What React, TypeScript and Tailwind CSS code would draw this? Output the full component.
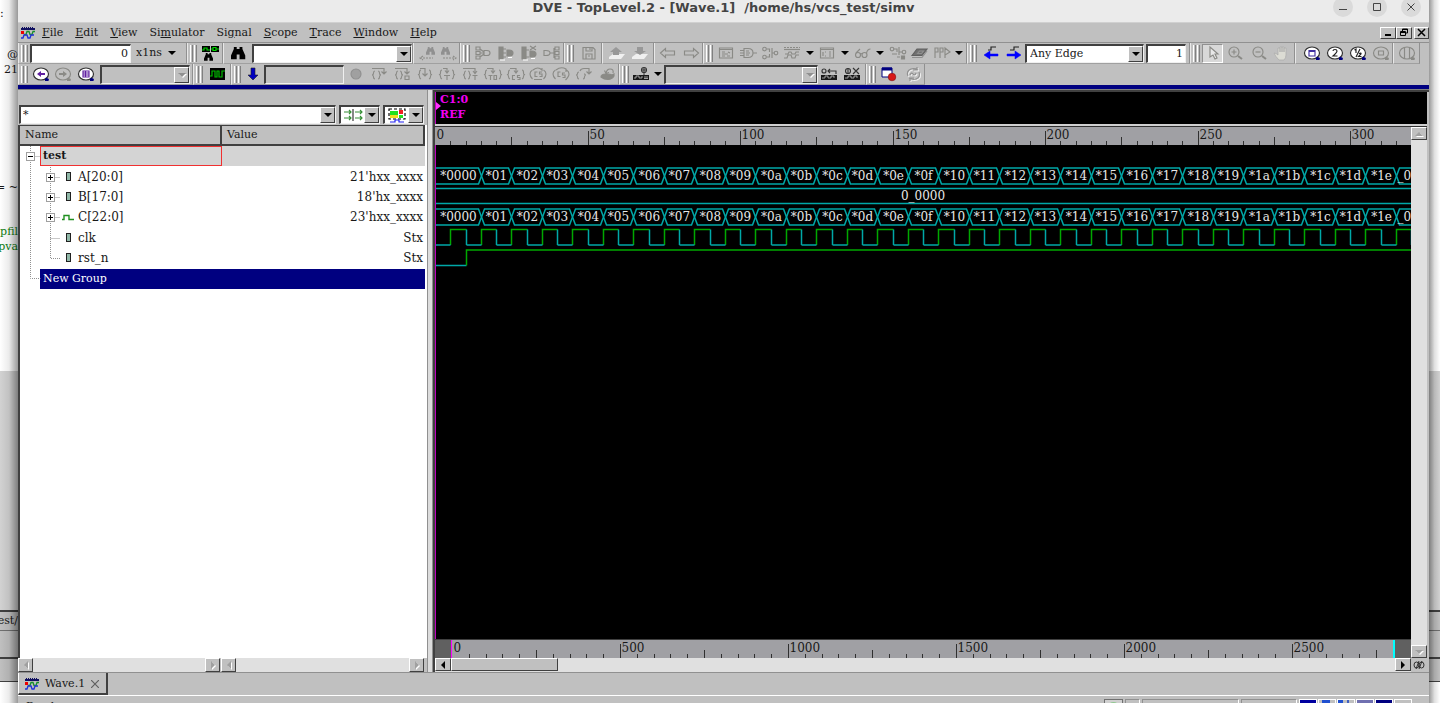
import React from 'react';

type Kids = { children?: React.ReactNode };

const G = '#8a8a86';
const CYAN = '#00a8a8';
const GREEN = '#00a800';

/* ---------- bevel helpers ---------- */
const RAISED = 'border border-t-white border-l-white border-r-[#404040] border-b-[#404040] bg-[#c0c0c0]';
const SUNKEN = 'border-t-2 border-l-2 border-r border-b border-t-[#404040] border-l-[#404040] border-r-[#f0f0f0] border-b-[#f0f0f0]';

function Arrow({ dir = 'down', color = '#000' }: { dir?: 'down' | 'up' | 'left' | 'right'; color?: string }) {
  const pts = {
    down: '1,3 9,3 5,7',
    up: '1,7 9,7 5,3',
    left: '7,1 7,9 3,5',
    right: '3,1 3,9 7,5',
  }[dir];
  return (
    <svg width="10" height="10" viewBox="0 0 10 10" className="shrink-0">
      {color !== '#000' && <polygon points={pts} fill="#fff" transform="translate(1 1)" />}
      <polygon points={pts} fill={color} />
    </svg>
  );
}

function Ico({ label, children, className = 'flex-1' }: Kids & { label: string; className?: string }) {
  return (
    <button aria-label={label} className={`flex h-full min-w-0 items-center justify-center ${className}`}>
      <svg width="20" height="16" viewBox="0 0 20 16" fill="none" stroke={G} strokeWidth="1.150" className="shrink-0">
        {children}
      </svg>
    </button>
  );
}

function MenuArrow({ label }: { label: string }) {
  return (
    <button aria-label={label} className="flex h-full w-[13px] shrink-0 items-center justify-center">
      <Arrow />
    </button>
  );
}

function Group({ children, handle, className }: Kids & { handle?: boolean; className: string }) {
  return (
    <div className={`flex h-full shrink-0 items-center overflow-hidden border-l border-r border-b border-l-[#e8e8e8] border-r-[#909090] border-b-[#a0a0a0] ${className}`}>
      {handle && (
        <div className="mx-[2px] flex h-[17px] shrink-0 gap-px">
          <div className="w-[3px] border-l border-r border-l-white border-r-[#808080]" />
          <div className="w-[3px] border-l border-r border-l-white border-r-[#808080]" />
        </div>
      )}
      {children}
    </div>
  );
}

function Combo({ label, value = '', className, disabled }: { label: string; value?: string; className: string; disabled?: boolean }) {
  return (
    <div className={`flex h-[19px] items-stretch ${SUNKEN} ${disabled ? 'bg-[#c0c0c0]' : 'bg-white'} ${className}`}>
      <input aria-label={label} defaultValue={value} disabled={disabled} className="w-0 min-w-0 flex-1 bg-transparent px-[2px] outline-none" />
      <button aria-label={`${label} list`} className={`flex w-[15px] shrink-0 items-center justify-center ${RAISED}`}>
        <Arrow color={disabled ? '#909090' : '#000'} />
      </button>
    </div>
  );
}

/* ---------- icons ---------- */
function WaveIcon() {
  return (
    <svg width="14" height="12" viewBox="0 0 14 12" fill="none" className="shrink-0">
      <path d="M0 2h14" stroke="#101060" strokeWidth="2" />
      <path d="M1 .5h12" stroke="#101060" strokeWidth="1" strokeDasharray="1 1" />
      <rect x="0" y="4" width="3" height="3" fill="#e00" />
      <path d="M3 7.500h2l1-3h2l1 3h2l1-3h2" stroke="#18902c" strokeWidth="1.3" />
      <path d="M0 11h2l1-3h3l1 3h2l1-3h3" stroke="#2030d8" strokeWidth="1.3" />
    </svg>
  );
}

const binoc = (x: number, y: number, s: number, c: string) => (
  <g transform={`translate(${x} ${y}) scale(${s})`} fill={c} stroke="none">
    <path d="M3 0h3v2h3V0h3v2l3 7v4H9V8H6v5H0V9l3-7z" />
  </g>
);

const lens = (c: string, tail: string, inner: React.ReactNode, fill = '#fff') => (
  <>
    <ellipse cx="10" cy="8" rx="7.500" ry="6" stroke={c} fill={fill} />
    <path d="M14.500 12.500l3 1.500h-3.500" stroke={tail} strokeWidth="2" />
    {inner}
  </>
);

function ToolbarTop() {
  return (
    <div className="flex h-[22px] shrink-0 border-t border-[#909090]">
      <Group handle className="w-[169px]">
        <input aria-label="Time" defaultValue="0" className={`h-[19px] w-[101px] bg-white px-[2px] text-right outline-none ${SUNKEN}`} />
        <div className="relative flex flex-1 items-center">
          <select aria-label="Time unit" className="w-full appearance-none bg-transparent pl-[5px] outline-none">
            <option>x1ns</option>
          </select>
          <span className="pointer-events-none absolute right-[9px]"><Arrow /></span>
        </div>
      </Group>
      <Group handle className="w-[36px]">
        <Ico label="Find signal">
          <rect x="1" y="1" width="8" height="6" fill="#000" stroke="none" />
          <path d="M1 5h2V3h3v2h3" stroke="#00d800" />
          <path d="M10 1h8v6h-8z" fill="#000" stroke="none" />
          <path d="M10 4h2M12 2.500h3v3h-3zM15 4h3" stroke="#00d800" />
          {binoc(3, 8, 0.6, '#000')}
        </Ico>
      </Group>
      <Group className="w-[190px]">
        <Ico label="Find">{binoc(3, 2, 0.95, '#000')}</Ico>
        <Combo label="Search text" className="w-[160px]" />
      </Group>
      <Group className="w-[47px] pl-1">
        <Ico label="Find previous">
          {binoc(8, 2, 0.6, '#909090')}
          <path d="M2 13h13M5 11l-3 2 3 2" strokeDasharray="2 1" />
        </Ico>
        <Ico label="Find next">
          {binoc(2, 2, 0.6, '#909090')}
          <path d="M4 13h13M14 11l3 2-3 2" strokeDasharray="2 1" />
        </Ico>
      </Group>
      <Group handle className="w-[104px]">
        <Ico label="Drivers">
          <path d="M3 2h4v3H3zM3 6.500h4v3H3zM3 11h4v3H3zM7 4l4 3M7 12l4-3M7 8h4" />
          <path d="M11 5.500h3q3 0 3 2.500t-3 2.500h-3z" />
        </Ico>
        <Ico label="Loads">
          <path d="M3 2h4v12H3z" fill={G} />
          <path d="M7 4h3M7 8h3M7 12h3" />
          <path d="M11 5h2q4 0 4 3t-4 3h-2z" fill={G} />
          <path d="M4 15h5M12 12.500h4" stroke="#fff" />
        </Ico>
        <Ico label="Clear trace">
          <path d="M3 2h4v12H3z" fill={G} />
          <path d="M7 5h3M7 12h3M11 1l6 4M17 1l-6 4" />
          <path d="M11 6h2q4 0 4 3t-4 3h-2z" fill={G} />
          <path d="M4 15h5M12 13.500h4" stroke="#fff" />
        </Ico>
        <Ico label="Fan out">
          <path d="M2 5.500h2q4 0 4 2.500t-4 2.500H2zM8 8h4M12 3v10M13 2h4v3h-4zM13 6.500h4v3h-4zM13 11h4v3h-4z" />
        </Ico>
      </Group>
      <Group handle className="w-[38px]">
        <Ico label="Save">
          <path d="M4 2.500h10l2 2v9.500H4zM7 3v3h6V3M7 14V9h6v5M11 3v2M9 11h2" />
        </Ico>
      </Group>
      <Group className="w-[52px] px-[2px]">
        <Ico label="Move up">
          <path d="M2 12l4-3h12l-4 5H2z" fill="#f0f0f0" stroke="none" />
          <path d="M9 2l6 5h-3v3H6V7H3z" fill="#989898" stroke="none" />
        </Ico>
        <Ico label="Move down">
          <path d="M2 12l4-3h12l-4 5H2z" fill="#f0f0f0" stroke="none" />
          <path d="M10 10l6-4h-3V2H7v4H4z" fill="#989898" stroke="none" />
        </Ico>
      </Group>
      <Group className="w-[49px] pl-[2px]">
        <Ico label="Back"><path d="M2.500 8l5-4.500v2.500h9v4h-9v2.500z" /></Ico>
        <Ico label="Forward"><path d="M17.500 8l-5-4.500v2.500h-9v4h9v2.500z" /></Ico>
      </Group>
      <Group handle className="w-[264px]">
        <Ico label="Source"><path d="M3.500 3h13v10h-13zM3 4.500h14M6 7h3M6 9h6M12 7l2 1M6 11h3M11 11h3" /></Ico>
        <Ico label="Schematic"><path d="M6 3.500h4q5 0 5 4.500t-5 4.500H6zM2 5.500h4M2 8h4M2 10.500h4M15 8h4M8 6h3M8 8h4M8 10h3" /></Ico>
        <Ico label="Path schematic">
          <circle cx="4.500" cy="4" r="1.800" /><circle cx="4.500" cy="12" r="1.800" /><circle cx="16" cy="8" r="1.800" />
          <path d="M6.500 4h3v3M6.500 12h3V9M12 3v10M12 8h2" />
        </Ico>
        <Ico label="Waveform">
          <path d="M2 2.500h16" strokeDasharray="2 1" /><path d="M2 4.500h16" />
          <path d="M3 9h3l1-2h2l1 2h3l1-2h3M2 13h3l1-3h3l1 3h3l1-3h3" />
        </Ico>
        <MenuArrow label="Waveform options" />
        <Ico label="List"><path d="M3.500 3h13v10h-13zM3 4.500h14M6 7v4M8 7h1M12 7h2M12 9h2M8 11h1M12 11h2" /></Ico>
        <MenuArrow label="List options" />
        <Ico label="Watch">
          <circle cx="5" cy="10" r="2.500" /><circle cx="11.500" cy="10" r="2.500" />
          <path d="M7 9q1-1 2 0M3 8l4-4M13.500 8q1-4 4-4" />
        </Ico>
        <MenuArrow label="Watch options" />
        <Ico label="Hierarchy">
          <circle cx="4" cy="4" r="1.800" /><circle cx="16" cy="7" r="1.800" />
          <path d="M6 4h3v3M4 9h5M11 2v8M11 7h3M9 12h3" /><path d="M13.500 11h3v3h-3z" fill={G} />
        </Ico>
        <Ico label="Memory">
          <path d="M2 10.500l5-6.500h10l-5 6.500z" fill="#707070" stroke="#606060" />
          <path d="M2 12.500h10l5-6.500M7.500 8.500l2-2.500h4l-2 2.500z" stroke="#909090" />
        </Ico>
        <Ico label="Path"><path d="M3 13V3h3v4H3M8 13V3h3v4H8M13 13V3l5 4-5 3" /></Ico>
        <MenuArrow label="Path options" />
      </Group>
      <Group handle className="w-[223px]">
        <Ico label="Previous edge">
          <path d="M7 5h3V2h5" stroke="#202020" />
          <path d="M3 10l6-4v3h8v2H9v3z" fill="#00f" stroke="#00f" strokeWidth=".5" />
        </Ico>
        <Ico label="Next edge">
          <path d="M6 5h4V2h5" stroke="#202020" />
          <path d="M17 10l-6-4v3H3v2h8v3z" fill="#00f" stroke="#00f" strokeWidth=".5" />
        </Ico>
        <div className={`relative flex h-[19px] w-[119px] items-center bg-white ${SUNKEN}`}>
          <select aria-label="Edge kind" className="w-full appearance-none bg-transparent pl-[3px] outline-none">
            <option>Any Edge</option>
          </select>
          <span className={`pointer-events-none absolute right-0 flex h-full w-[15px] items-center justify-center ${RAISED}`}><Arrow /></span>
        </div>
        <input aria-label="Edge count" defaultValue="1" className={`mr-[3px] ml-[2px] h-[19px] w-[40px] bg-white px-[2px] text-right outline-none ${SUNKEN}`} />
      </Group>
      <Group handle className="w-[105px]">
        <div className="flex h-[19px] w-[21px] border border-t-[#909090] border-r-white border-b-white border-l-[#909090] bg-[#d8d8d8]">
          <Ico label="Select tool"><path d="M7 2v10l3-2 2 4 2-1-2-4h3z" fill="#e8e8e8" /></Ico>
        </div>
        <Ico label="Zoom in"><circle cx="9" cy="7" r="5" /><path d="M13 11l4 3" strokeWidth="2" /><path d="M6.500 7h5M9 4.500v5" /></Ico>
        <Ico label="Zoom out"><circle cx="9" cy="7" r="5" /><path d="M13 11l4 3" strokeWidth="2" /><path d="M6.500 7h5" /></Ico>
        <Ico label="Pan">
          <path d="M7 15q-4-4-5-7 2 0 4 2V3h2v4V2h2v5V2h2v5V3h2v7q0 3-2 5z" fill="#dcdcd4" stroke="#aaa" strokeWidth=".7" />
        </Ico>
      </Group>
      <Group className="w-[98px] pl-1">
        <Ico label="Zoom full">{lens('#303030', '#000080', <path d="M7 5.500h6v5.500H7zM7 6.500h6" stroke="#4030a0" />)}</Ico>
        <Ico label="Zoom 2x">{lens('#303030', '#000080', <path d="M8 6q0-1.500 2-1.500t2 1.500-4 5h4.500" stroke="#202020" />)}</Ico>
        <Ico label="Zoom half">{lens('#303030', '#000080', <path d="M6.500 5l1.500-1v4M12 4l-4 8M11 8.500q2.500-1 2 .5l-2.500 2.500h3" stroke="#202020" />)}</Ico>
        <Ico label="Zoom fit">{lens(G, G, <path d="M7.500 6h5v4h-5z" />, 'none')}</Ico>
      </Group>
      <Group className="w-[27px]">
        <Ico label="Zoom cursors">{lens(G, G, <path d="M7.500 2.500v11M12.500 2.500v11" />, 'none')}</Ico>
      </Group>
    </div>
  );
}

const steps: { label: string; art: React.ReactNode }[] = [
  { label: 'Step', art: <path d="M6 5q-1.500 0-1.500 2T3 9q1.500 0 1.500 2T6 13M9 5q1.500 0 1.500 2T12 9q-1.500 0-1.500 2T9 13M3 2.500h12V8M12.500 5.500L15 8l2.500-2.500" /> },
  { label: 'Next', art: <path d="M6 5q-1.500 0-1.500 2T3 9q1.500 0 1.500 2T6 13M8 5q1.500 0 1.500 2T11 9q-1.500 0-1.500 2T8 13M3 2.500h12V8M12.500 5.500L15 8l2.500-2.500M13 10h4v3.500h-4z" /> },
  { label: 'Step in', art: <path d="M6 4q-1.500 0-1.500 2.500T3 8.500q1.500 0 1.500 2T6 13M14 4q1.500 0 1.500 2.500T17 8.500q-1.500 0-1.500 2T14 13M5 2.500h5V10M7.500 7.500L10 10l2.500-2.500" /> },
  { label: 'Step thread', art: <path d="M5 4q-1.500 0-1.500 2.500T2 8.500q1.500 0 1.500 2T5 13M15 4q1.500 0 1.500 2.500T18 8.500q-1.500 0-1.500 2T15 13M6 2.500h4V7M8 4.500L10 7l2-2.500M7 9.500h6M10 9.500V14" /> },
  { label: 'Next thread', art: <path d="M6 5q-1.500 0-1.500 2T3 9q1.500 0 1.500 2T6 13M8 5q1.500 0 1.500 2T11 9q-1.500 0-1.500 2T8 13M3 2.500h12V7M13 5l2 2.500L17 5M12.500 9.500h5M15 9.500V14" /> },
  { label: 'Step testbench', art: <path d="M4 4q-1.500 0-1.500 2.500T1 8.500q1.500 0 1.500 2T4 13M16 4q1.500 0 1.500 2.500T19 8.500q-1.500 0-1.500 2T16 13M4 2.500h6V7M8 4.500L10 7l2-2.500M5.500 9.500h4M7.500 9.500V14M11 9.500h2.500v4H11z" /> },
  { label: 'Step C code', art: <path d="M4 4q-1.500 0-1.500 2.500T1 8.500q1.500 0 1.500 2T4 13M16 4q1.500 0 1.500 2.500T19 8.500q-1.500 0-1.500 2T16 13M4 2.500h6V7M8 4.500L10 7l2-2.500M9 9.500H6.500v4H9M14 9.500h-2.500v2H14v2h-2.500" /> },
  { label: 'Enter C scope', art: <path d="M4.500 4Q2 5.500 2 8t2.500 5M15.500 4Q18 5.500 18 8t-2.500 5M5 4q5-4 9 0v-2M9.500 6H7v4.500h2.500M14 6h-2.500v2H14v2.500h-2.500M6 13.500h8" /> },
  { label: 'Leave C scope', art: <path d="M4.500 4Q2 5.500 2 8t2.500 5M15.500 4Q18 5.500 18 8t-3.500 6M5 4q5-4 10-1v3M9.500 6H7v4.500h2.500M14 7h-2.500v2H14v2.500h-2.500" /> },
  { label: 'Step out', art: <path d="M5 6q-1.500 0-1.500 1.500T2 9q1.500 0 1.500 2T5 13M9 13q1.500 0 1.500-2T12 9q-1.500 0-1.500-1.500M6 5q1-2.500 4-2.500h5V8M12.500 5.500L15 8l2.500-2.500" /> },
];

function ToolbarBottom() {
  return (
    <div className="flex h-[21px] shrink-0">
      <Group handle className="w-[175px] pr-[2px]">
        <div className="flex h-full w-[70px] pr-[3px]">
          <Ico label="Zoom back">{lens('#303030', '#000080', <path d="M6 8l4-3v2h4v2h-4v2z" fill="#6020a0" stroke="none" />)}</Ico>
          <Ico label="Zoom forward">{lens(G, G, <path d="M14 8l-4-3v2H6v2h4v2z" fill={G} stroke="none" />, 'none')}</Ico>
          <Ico label="Zoom list">{lens('#303030', '#000080', <path d="M7 5h6v6H7zM7 7h6M7 9h6M9.500 5v6" stroke="#6020a0" />)}</Ico>
        </div>
        <Combo label="Zoom bookmark" disabled className="flex-1" />
      </Group>
      <Group handle className="w-[38px]">
        <Ico label="Compare waves">
          <rect x="2" y="2" width="15" height="12" fill="#000" stroke="none" />
          <path d="M2 10h2V5h3v6h2V5h2v6h3V5h3" stroke="#00c000" />
        </Ico>
      </Group>
      <Group handle className="w-[388px]">
        <Ico label="Run" className="w-[20px] shrink-0">
          <path d="M10 14L5 9h3V2h4v7h3z" fill="#0000c0" stroke="#202020" strokeWidth=".6" />
        </Ico>
        <input aria-label="Run time" className={`mr-px ml-px h-[19px] w-[80px] bg-[#c0c0c0] px-1 outline-none ${SUNKEN}`} />
        <Ico label="Stop"><circle cx="10" cy="8" r="5" fill="#a0a0a0" stroke="#909090" /></Ico>
        {steps.map((s) => (
          <Ico key={s.label} label={s.label}>{s.art}</Ico>
        ))}
        <Ico label="Reset"><path d="M4 11q0-3 5-3t6 1l2-1v2q-2 3.500-6 3.500T4 11z" fill={G} stroke={G} /><path d="M9 7q1-4 4-4 4 0 3 4M7.500 4.500L9 7.500l3-1" /></Ico>
      </Group>
      <Group handle className="w-[247px] pr-[2px]">
        <Ico label="Add signal set" className="w-[20px] shrink-0">
          <path d="M2 9h16v5H2z" fill="#181818" stroke="none" />
          <circle cx="13" cy="4" r="2.500" stroke="#333" /><path d="M13 2v7M10 4h6" stroke="#333" strokeWidth="1" />
          <path d="M3 12h2v-2h3v2h3v-2M13 11h4M13 12.500h4" stroke="#c0c0c0" strokeWidth=".8" />
        </Ico>
        <MenuArrow label="Signal set options" />
        <Combo label="Signal set" disabled className="w-[154px]" />
        <Ico label="Restore set">
          <path d="M2 9h16v5H2z" fill="#181818" stroke="none" />
          <circle cx="5" cy="5" r="2" stroke="#333" /><path d="M9 5h8v3M11 3L9 5l2 2" stroke="#333" />
          <path d="M3 12h3v-2h3v2h3v-2h3v2" stroke="#c0c0c0" strokeWidth=".8" />
        </Ico>
        <Ico label="Delete set">
          <path d="M2 9h16v5H2z" fill="#181818" stroke="none" />
          <circle cx="6" cy="5" r="2.500" stroke="#333" /><path d="M6 2v6M11 2l6 6M17 2l-6 6" stroke="#333" />
          <path d="M3 12h3v-2h3v2h3v-2h3v2" stroke="#c0c0c0" strokeWidth=".8" />
        </Ico>
      </Group>
      <Group handle className="w-[59px]">
        <Ico label="Breakpoints">
          <path d="M2 2h10v9H2z" fill="#fff" stroke="#000080" strokeWidth="1" />
          <path d="M2 3h10" stroke="#000080" strokeWidth="3" />
          <circle cx="12" cy="11" r="3.800" fill="#d81818" stroke="#801010" strokeWidth=".6" />
        </Ico>
        <Ico label="Refresh">
          <path d="M5 10q-2-5 3-7 4-1 7 1M14 1v3h-4M16 6q2 5-3 7-4 1-7-1M7 15v-3h4M7 9q1-3 3-1t3-1" stroke="#f0f0f0" transform="translate(1 1)" />
          <path d="M5 10q-2-5 3-7 4-1 7 1M14 1v3h-4M16 6q2 5-3 7-4 1-7-1M7 15v-3h4M7 9q1-3 3-1t3-1" stroke="#909090" />
        </Ico>
      </Group>
    </div>
  );
}

/* ---------- menu ---------- */
const menus: [string, string, string][] = [
  ['', 'F', 'ile'], ['', 'E', 'dit'], ['', 'V', 'iew'], ['Si', 'm', 'ulator'], ['Si', 'g', 'nal'],
  ['', 'S', 'cope'], ['', 'T', 'race'], ['', 'W', 'indow'], ['', 'H', 'elp'],
];

function MenuBar() {
  return (
    <nav className="flex h-[20px] shrink-0 items-center border-t border-[#d0d0d0] pl-[3px]">
      <WaveIcon />
      <div className="ml-[7px] flex gap-[12px]">
        {menus.map(([a, b, c]) => (
          <button key={a + b + c}>{a}<u className="underline-offset-1">{b}</u>{c}</button>
        ))}
      </div>
      <div className="ml-auto flex items-center">
        <button aria-label="Minimize view" className={`flex h-[12px] w-[16px] items-end justify-center pb-px ${RAISED}`}>
          <svg width="8" height="3"><path d="M1 1h6" stroke="#000" strokeWidth="2" /></svg>
        </button>
        <button aria-label="Restore view" className={`flex h-[12px] w-[16px] items-center justify-center ${RAISED}`}>
          <svg width="10" height="9" fill="none" stroke="#000"><path d="M3.500 3V1h5v4H7M3 1.500h6M1.500 3.500h5v4h-5zM1 4.500h6" /></svg>
        </button>
        <button aria-label="Close view" className={`ml-[2px] flex h-[12px] w-[15px] items-center justify-center ${RAISED}`}>
          <svg width="9" height="9" stroke="#000" strokeWidth="1.500"><path d="M1 1l7 7M8 1L1 8" /></svg>
        </button>
      </div>
    </nav>
  );
}

/* ---------- signal list ---------- */
const signals = [
  { name: 'A[20:0]', value: "21'hxx_xxxx", kind: 'reg' },
  { name: 'B[17:0]', value: "18'hx_xxxx", kind: 'reg' },
  { name: 'C[22:0]', value: "23'hxx_xxxx", kind: 'wire' },
  { name: 'clk', value: 'Stx', kind: 'reg' },
  { name: 'rst_n', value: 'Stx', kind: 'reg' },
];

function ScrollX({ className }: { className: string }) {
  return (
    <div className={`flex justify-between bg-[#e0e0e0] ${className}`}>
      <button aria-label="Scroll left" className={`flex w-[15px] items-center justify-center ${RAISED}`}><Arrow dir="left" color="#a0a0a0" /></button>
      <button aria-label="Scroll right" className={`flex w-[15px] items-center justify-center ${RAISED}`}><Arrow dir="right" color="#a0a0a0" /></button>
    </div>
  );
}

function Expander({ x, y, plus }: { x: number; y: number; plus?: boolean }) {
  return (
    <g fill="none" strokeDasharray="none">
      <rect x={x - 4} y={y - 4} width="8" height="8" fill="#fff" stroke="#a0a0a0" />
      <path d={`M${x - 2.5} ${y}h5${plus ? `M${x} ${y - 2.5}v5` : ''}`} stroke="#000" />
    </g>
  );
}

function SignalPanel() {
  return (
    <section className="flex w-[409px] shrink-0 flex-col">
      <div className="mt-[15px] flex h-[20px] shrink-0 gap-[3px] pr-[3px] pl-px">
        <Combo label="Signal filter" value="*" className="flex-1" />
        <div className={`flex h-[19px] w-[41px] bg-white ${SUNKEN}`}>
          <Ico label="Port filter">
            <path d="M1 5h7M6 3l2 2-2 2M1 11h7M6 9l2 2-2 2M12 5h7M17 3l2 2-2 2M12 11h7M17 9l2 2-2 2" stroke="#389038" />
            <path d="M10 2v12" stroke="#303030" />
          </Ico>
          <button aria-label="Port filter list" className={`flex w-[15px] items-center justify-center ${RAISED}`}><Arrow /></button>
        </div>
        <div className={`flex h-[19px] w-[41px] bg-white ${SUNKEN}`}>
          <Ico label="Type filter">
            <path d="M2 2h16v10H2z" stroke="#000" strokeDasharray="3 2" />
            <path d="M3 4h8v4H3z" fill="#20e020" stroke="none" /><path d="M12 3h4v4h-4z" fill="#f02020" stroke="none" />
            <path d="M3 8h8v3H3z" fill="#f0e020" stroke="none" /><path d="M12 8h4v3h-4z" fill="#20e020" stroke="none" />
            <path d="M3 15h5v-2h4v2h5" stroke="#2020f0" />
          </Ico>
          <button aria-label="Type filter list" className={`flex w-[15px] items-center justify-center ${RAISED}`}><Arrow /></button>
        </div>
      </div>
      <div className="relative min-h-0 flex-1 overflow-hidden border-l-2 border-[#404040] bg-white">
        <table className="h-[164px] w-[405px] table-fixed border-separate border-spacing-0">
          <thead>
            <tr className="h-[21px] bg-[#c0c0c0] text-left">
              <th className="w-[202px] border-t border-r-2 border-b-2 border-[#404040] p-0 pl-[5px] font-normal">Name</th>
              <th className="border-t border-r-2 border-b-2 border-[#404040] p-0 pl-[5px] font-normal">Value</th>
            </tr>
          </thead>
          <tbody>
            <tr className="h-[20px]">
              <td className="bg-[linear-gradient(to_right,white_20px,#d4d4d4_20px)] p-0 pl-[20px]">
                <div className="flex h-[20px] items-center border border-[#f03030] pl-[2px] font-bold">test</div>
              </td>
              <td className="bg-[#d4d4d4] p-0" />
            </tr>
            {signals.map((s) => (
              <tr key={s.name} className="h-[20px] text-[12px]">
                <td className="p-0 pl-[42px]">
                  <div className="flex items-center gap-[4px]">
                    <svg width="12" height="12" viewBox="0 0 12 12" fill="none">
                      {s.kind === 'reg'
                        ? <rect x="4.500" y="1.500" width="4" height="8" fill="#90b8a8" stroke="#202020" />
                        : <path d="M0 8.500h2V4.500h5v4h5" stroke="#209020" strokeWidth="1.400" />}
                    </svg>
                    {s.name}
                  </div>
                </td>
                <td className="p-0 pr-[2px] text-right">{s.value}</td>
              </tr>
            ))}
            <tr className="h-[20px]">
              <td className="bg-[linear-gradient(to_right,white_20px,#000080_20px)] p-0 pl-[23px] text-white">New Group</td>
              <td className="bg-[#000080] p-0" />
            </tr>
          </tbody>
        </table>
        <svg className="pointer-events-none absolute top-[21px] left-0" width="46" height="140" fill="none" stroke="#909090" strokeDasharray="1 1">
          <path d="M10.500 0v132.500h10M10.500 10.500h10M30.500 21v91.500h10M30.500 31.500h10M30.500 51.500h10M30.500 71.500h10M30.500 92.500h10" />
          <Expander x={10.5} y={10.5} />
          <Expander x={30.5} y={31.5} plus />
          <Expander x={30.5} y={51.5} plus />
          <Expander x={30.5} y={71.5} plus />
        </svg>
      </div>
      <div className="flex h-[14px] shrink-0 gap-px">
        <ScrollX className="w-[202px]" />
        <ScrollX className="w-[203px]" />
      </div>
    </section>
  );
}

/* ---------- waveform ---------- */
const SCALE = 3.05;
const range = (n: number) => Array.from({ length: n }, (_, i) => i);
const px = (t: number) => Math.round(t * SCALE) + 0.5;
const SPAN = 520;

function Ruler({ step, unit, origin, every, name }: { step: number; unit: number; origin: number; every: number; name: string }) {
  return (
    <svg className="block h-[19px] w-full min-w-0 flex-1 bg-[#a0a0a4] text-[12px]" role="img" aria-label={name}>
      {range(110).map((i) => {
        const x = Math.round(origin + i * step) + 0.5;
        const major = i % every === 0;
        const mid = i % (every / 2) === 0;
        return (
          <g key={i}>
            {i > 0 && <path d={`M${x} ${major ? 4 : mid ? 10 : 14}V19`} stroke="#303030" />}
            {major && <text x={x + 1} y="12" fill="#181818">{(i * unit).toString()}</text>}
          </g>
        );
      })}
    </svg>
  );
}

function Bus({ y }: { y: number }) {
  const cuts = range(50).map((i) => 15 + i * 10);
  const bot = y + 16;
  const mid = y + 8;
  return (
    <g fill="none" stroke={CYAN} strokeWidth="1.500">
      <path d={`M0 ${y}H${px(15) - 3}L${px(15)} ${mid}L${px(15) - 3} ${bot}H0`} />
      {cuts.map((t) => {
        const a = px(t);
        const b = px(t + 10);
        return <path key={t} d={`M${a} ${mid}L${a + 3} ${y}H${b - 3}L${b} ${mid}L${b - 3} ${bot}H${a + 3}Z`} />;
      })}
      <g fill="#e8e8e8" stroke="none">
        <text x={px(7.5)} y={y + 12} textAnchor="middle">*0000</text>
        {range(30).map((i) => (
          <text key={i} x={px(20 + i * 10)} y={y + 12} textAnchor="middle">
            {'*' + (i + 1).toString(16).padStart(2, '0')}
          </text>
        ))}
        <text x={px(315) + 1} y={y + 12}>_0</text>
      </g>
    </g>
  );
}

function Waves() {
  return (
    <svg className="block h-full w-full bg-black text-[12px]" role="img" aria-label="Waveforms">
      <Bus y={23} />
      <path d={`M0 43.500H${px(SPAN)}M0 58.500H${px(SPAN)}`} stroke={CYAN} strokeWidth="1.500" />
      <text x="50%" y="55" textAnchor="middle" fill="#e8e8e8">0_0000</text>
      <Bus y={64} />
      {range(50).map((i) => {
        const a = px(i * 10);
        const r = px(i * 10 + 5);
        const f = px(i * 10 + 10);
        return (
          <g key={i} fill="none" strokeWidth="1.500">
            <path d={`M${r} 100V84.500H${f}`} stroke={GREEN} />
            <path d={`M${a} 100H${r}M${f} 84.500V100`} stroke={CYAN} />
          </g>
        );
      })}
      <path d={`M0 120.500H${px(10)}`} stroke={CYAN} strokeWidth="1.500" />
      <path d={`M${px(10)} 120.500V105H${px(SPAN)}`} fill="none" stroke={GREEN} strokeWidth="1.500" />
      <path d="M.5 0V2000" stroke="#c000c0" />
    </svg>
  );
}

function WavePanel() {
  return (
    <section className="flex min-w-0 flex-1 flex-col border-t-2 border-l-2 border-[#404040] bg-[#c0c0c0] pr-[2px]">
      <div className="relative h-[32px] shrink-0 border-l border-[#c000c0] bg-black pl-[4px] text-[11px] leading-[15px] font-bold text-[#f000f0]">
        <p>C1:0</p>
        <p>REF</p>
        <svg className="absolute top-[10px] left-0" width="5" height="8"><path d="M0 0l5 4-5 4z" fill="#ff30ff" /></svg>
      </div>
      <div className="h-[3px] shrink-0 border-b border-[#303030] bg-[#d0d0d0]" />
      <div className="flex min-h-0 flex-1">
        <div className="flex min-w-0 flex-1 flex-col">
          <div className="flex h-[18px] shrink-0"><Ruler step={SCALE * 5} unit={5} origin={0} every={10} name="Time ruler" /></div>
          <div className="min-h-0 flex-1"><Waves /></div>
          <div className="flex h-[19px] shrink-0 border-t border-[#404040]">
            <div className="w-[17px] shrink-0 border-r border-r-[#ff00ff] bg-[#606060]" />
            <Ruler step={16.8} unit={50} origin={0} every={10} name="Overview ruler" />
            <div className="w-[18px] shrink-0 border-l-2 border-l-[#00ffff] bg-[#606060]" />
          </div>
        </div>
        <div className="flex w-[16px] shrink-0 flex-col justify-between bg-[#e0e0e0]">
          <button aria-label="Scroll up" className={`flex h-[13px] items-center justify-center ${RAISED}`}><Arrow dir="up" color="#a0a0a0" /></button>
          <button aria-label="Scroll down" className={`flex h-[13px] items-center justify-center ${RAISED}`}><Arrow dir="down" color="#a0a0a0" /></button>
        </div>
      </div>
      <div className="flex h-[14px] shrink-0 bg-[#e0e0e0]">
        <button aria-label="Scroll left" className={`flex h-[13px] w-[16px] items-center justify-center ${RAISED}`}><Arrow dir="left" /></button>
        <div className={`h-[13px] w-[107px] ${RAISED}`} />
        <button aria-label="Scroll right" className={`ml-auto flex h-[13px] w-[16px] items-center justify-center ${RAISED}`}><Arrow dir="right" /></button>
        <button aria-label="Link views" className="flex w-[16px] items-center justify-center bg-[#c0c0c0]">
          <svg width="12" height="10" fill="none" stroke="#303030"><ellipse cx="3.500" cy="5" rx="2.500" ry="3" /><ellipse cx="8.500" cy="5" rx="2.500" ry="3" /><path d="M3 9L6 1M6 9L9 1" /></svg>
        </button>
      </div>
    </section>
  );
}

/* ---------- window frame ---------- */
const frameIcons = [
  { label: 'Minimize', d: 'M6 12.5h8' },
  { label: 'Maximize', d: 'M6.5 6.5h7v7h-7z' },
  { label: 'Close', d: 'M6.5 6.5l7 7M13.5 6.500l-7 7' },
];

function TitleBar() {
  return (
    <header className="relative flex h-[22px] shrink-0 items-start justify-center overflow-hidden bg-[#ebebeb]">
      <h1 className="text-[13px] leading-[15px] font-bold whitespace-pre text-[#444] [font-family:'DejaVu_Sans',sans-serif]">
        DVE - TopLevel.2 - [Wave.1]  /home/hs/vcs_test/simv
      </h1>
      <div className="absolute -top-[3px] right-[8px] flex gap-[14px]">
        {frameIcons.map((f) => (
          <button key={f.label} aria-label={f.label}>
            <svg width="20" height="20" viewBox="0 0 20 20" fill="none" stroke="#444">
              <circle cx="10" cy="10" r="10" fill="#dadada" stroke="none" />
              <path d={f.d} />
            </svg>
          </button>
        ))}
      </div>
    </header>
  );
}

function StatusBar() {
  const field = 'h-3 border border-[#909090] border-b-0 border-r-white';
  return (
    <footer className="flex h-[8px] shrink-0 overflow-hidden border-t border-white pt-[3px] pr-[17px]">
      <span className="pt-[2px] pl-[8px] leading-[11px]">Ready</span>
      <div className="ml-auto flex gap-[2px]">
        <button aria-label="Status" className="h-3 w-[19px] border border-[#707070] bg-[#d0d0d0] p-[2px]"><span className="block h-2 rounded-t-full bg-[#90c890]" /></button>
        <div className={`${field} w-[15px]`} />
        <div className={`${field} w-[97px]`} />
        <div className={`${field} w-[56px]`} />
        <div className="flex gap-px">
          <span className="h-3 w-[18px] border border-white bg-[#0000a0]" />
          <span className="h-3 w-[18px] border border-white bg-[linear-gradient(to_right,#c0c0c0_3px,#2050d0_3px,#2050d0_11px,#c0c0c0_11px)]" />
          <span className="h-3 w-[18px] border border-white bg-[linear-gradient(to_right,#2050d0_5px,#c0c0c0_5px,#c0c0c0_9px,#4060c0_9px,#4060c0_11px,#c0c0c0_11px)]" />
          <span className="h-3 w-[18px] border border-white bg-[#7070b0]" />
          <span className="h-3 w-[18px] border border-white bg-[#000080]" />
          <span className="h-3 w-[18px] border border-white bg-[#c0c0c0]" />
        </div>
      </div>
    </footer>
  );
}

function LeftBackdrop() {
  return (
    <aside className="relative w-[18px] shrink-0 overflow-hidden bg-white">
      <div className="flex h-full flex-col items-end whitespace-nowrap">
        <div className="flex h-[371px] w-full shrink-0 flex-col items-end">
          <p className="mt-[6px] w-full leading-[15px]">:</p>
          <p className="mt-[26px] leading-[15px]">@</p>
          <p className="leading-[16px]">21</p>
          <p className="mt-[102px] leading-[15px]">= ~</p>
          <p className="mt-[29px] leading-[15px] text-[#108010]">pfil</p>
          <p className="leading-[15px] text-[#108010]">pva</p>
        </div>
        <div className="min-h-0 w-full flex-1 bg-[#d2d2d2]" />
        <div className="flex h-[20px] w-full shrink-0 items-center justify-end border-t-2 border-[#404040] bg-[#c0c0c0]">est/</div>
        <div className="h-[27px] w-full shrink-0 border-t border-[#707070] bg-[#c0c0c0]" />
        <div className="h-[25px] w-full shrink-0 border-t-2 border-b border-[#404040] bg-[#c0c0c0]" />
        <div className="h-[21px] w-full shrink-0 bg-white" />
      </div>
      <div className="absolute inset-0 bg-[linear-gradient(to_right,transparent,rgba(0,0,0,0.08)_50%,rgba(0,0,0,0.4))]" />
    </aside>
  );
}

function RightBackdrop() {
  return (
    <aside className="relative flex w-[11px] shrink-0 flex-col bg-white">
      <div className="h-[371px] shrink-0" />
      <div className="min-h-0 flex-1 bg-[#d2d2d2]" />
      <div className="h-[20px] shrink-0 border-t-2 border-[#404040] bg-[#c0c0c0]" />
      <div className="h-[27px] shrink-0 border-t border-[#707070] bg-[#c0c0c0]" />
      <div className="h-[25px] shrink-0 border-t-2 border-b border-[#404040] bg-[#c0c0c0]" />
      <div className="h-[21px] shrink-0" />
      <div className="absolute inset-0 bg-[linear-gradient(to_left,transparent,rgba(0,0,0,0.12)_50%,rgba(0,0,0,0.4))]" />
    </aside>
  );
}

export default function App() {
  return (
    <div className="flex h-screen w-full overflow-hidden text-[11px] leading-[14px] text-[#181818] [font-family:'DejaVu_Serif',serif]">
      <LeftBackdrop />
      <main className="flex min-w-0 flex-1 flex-col bg-[#c0c0c0]">
        <TitleBar />
        <MenuBar />
        <ToolbarTop />
        <ToolbarBottom />
        <div className="h-[5px] shrink-0 border-b border-[#808080] bg-[#000080]" />
        <div className="flex min-h-0 flex-1">
          <SignalPanel />
          <div className="w-[6px] shrink-0 border-r border-l border-r-[#909090] border-l-[#909090] bg-[#dcdcdc]" />
          <WavePanel />
        </div>
        <div className="flex h-[23px] shrink-0 items-start border-t border-[#909090]">
          <div className="flex h-[22px] w-[90px] items-center border-r-2 border-b-2 border-l border-r-[#404040] border-b-[#404040] border-l-white pt-px pl-[6px]">
            <WaveIcon />
            <button className="ml-[6px]">Wave.1</button>
            <button aria-label="Close tab" className="ml-[6px]">
              <svg width="8" height="8" stroke="#606060" strokeWidth="1.200"><path d="M0 0l8 8M8 0L0 8" /></svg>
            </button>
          </div>
        </div>
        <StatusBar />
      </main>
      <RightBackdrop />
    </div>
  );
}
